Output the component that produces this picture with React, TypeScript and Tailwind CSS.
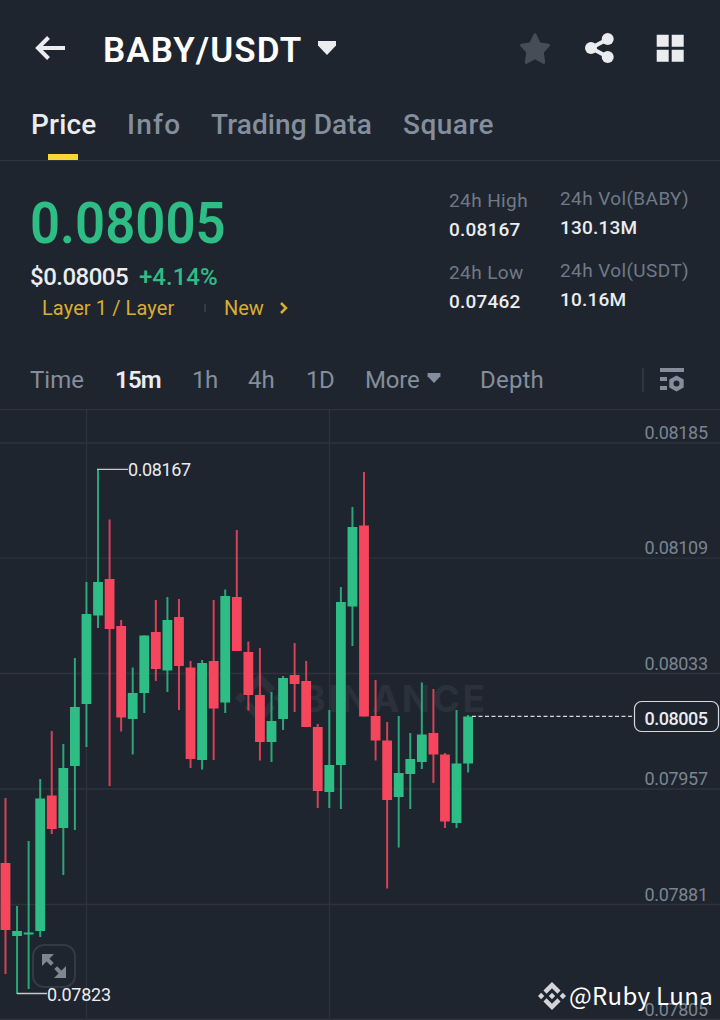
import { SiBinance } from "react-icons/si";

const UP = "#2ebd85";
const DOWN = "#f6465d";
const CHART_TOP = 409;

// [direction, wick top, body top, body bottom, wick bottom]
const candles: [string, number, number, number, number][] = [
  ["d", 798, 863, 930, 974],
  ["u", 906, 931, 936, 994],
  ["u", 841, 932.5, 934.5, 989],
  ["u", 779, 798.5, 931, 937],
  ["d", 731, 795.5, 829, 834],
  ["u", 744, 768, 828, 875],
  ["u", 658, 707, 766, 830],
  ["u", 582, 614, 704, 747],
  ["u", 469, 582, 615.5, 628],
  ["d", 519.5, 579, 629, 786],
  ["d", 620, 626, 717.5, 731.5],
  ["u", 667.5, 693, 719, 754.5],
  ["u", 635.5, 635.5, 693, 713],
  ["d", 600, 632, 669, 681],
  ["u", 597, 620, 670.5, 692],
  ["d", 599, 617, 666, 710],
  ["d", 661, 667.5, 759, 768],
  ["u", 660, 663, 760, 769.5],
  ["d", 600, 661, 708.5, 760],
  ["u", 589.5, 596, 702.5, 713],
  ["d", 530, 597, 651, 651],
  ["d", 641.5, 652, 695, 710.5],
  ["d", 648, 695, 742, 760.5],
  ["u", 692, 721, 742, 762],
  ["u", 676, 678, 719, 730],
  ["d", 643, 675, 684, 712],
  ["d", 661, 681, 727, 727],
  ["d", 724, 727, 791, 808],
  ["u", 710, 765, 792, 808],
  ["u", 587, 602, 765, 809],
  ["u", 507, 527, 606.5, 646],
  ["d", 472, 525.5, 716.5, 716.5],
  ["d", 680, 716, 740.5, 760.5],
  ["d", 722, 740.5, 800, 888.5],
  ["u", 716, 773, 797, 847.5],
  ["u", 733, 759, 774, 809],
  ["u", 682.5, 734.5, 762, 769],
  ["d", 689, 733, 754.5, 783],
  ["d", 753, 754.5, 821.5, 828],
  ["u", 710, 763.5, 823, 828],
  ["u", 715, 716.5, 763.5, 772.5],
];

const axis = [
  { y: 443, label: "0.08185" },
  { y: 558.2, label: "0.08109" },
  { y: 673.5, label: "0.08033" },
  { y: 789, label: "0.07957" },
  { y: 904.5, label: "0.07881" },
  { y: 1019.5, label: "0.07805" },
];

const stats = [
  { label: "24h High", value: "0.08167" },
  { label: "24h Low", value: "0.07462" },
];

const volumes = [
  { label: "24h Vol(BABY)", value: "130.13M" },
  { label: "24h Vol(USDT)", value: "10.16M" },
];

const Caret = ({ className }: { className: string }) => (
  <svg viewBox="0 0 18 14" className={className} fill="currentColor">
    <path d="M0 0h18v4.5L9 14 0 4.5z" />
  </svg>
);

const Header = () => (
  <header className="flex h-24 items-center">
    <svg viewBox="0 0 30 24" className="ml-[35px] h-6 w-[30px] text-[#eaecef]" fill="none" stroke="currentColor" strokeWidth="4">
      <path d="M30 12H4M13.5 1.5L3 12l10.500 10.500" />
    </svg>
    <h1 className="ml-[38px] w-[202px] pt-1.5 text-[35px] leading-10 font-semibold tracking-[1.1px] whitespace-nowrap text-white">
      BABY/USDT
    </h1>
    <Caret className="ml-[13px] h-3.5 w-[18px] text-[#eaecef]" />
    <svg viewBox="0 0 30 31" className="ml-[184px] h-[31px] w-[30px] text-[#474d57]" fill="currentColor">
      <path d="M13.600 1.200q1.400-2 2.800 0l3.900 8.300 8.400 1.300q2.200.7.800 2.400l-5.700 6.300 1.400 9.700q-.1 2.200-2.100 1.600L15 26.300l-8.100 4.500q-2 .6-2.100-1.600l1.400-9.700L.5 13.200q-1.400-1.700.8-2.400l8.400-1.300z" />
    </svg>
    <svg viewBox="0 0 30 30" className="ml-[35px] h-[30px] w-[30px] text-[#eaecef]" fill="currentColor">
      <path d="M6 15l17-9M6 15l17 9" stroke="currentColor" strokeWidth="4" />
      <circle cx="6" cy="15" r="6" />
      <circle cx="22.700" cy="6" r="6" />
      <circle cx="22.700" cy="24" r="6" />
    </svg>
    <svg viewBox="0 0 28 28" className="ml-[41px] h-7 w-7 text-[#eaecef]" fill="currentColor">
      <path d="M.7.700h12v12h-12zM15.700.700h12v12h-12zM.7 15.700h12v12h-12zM15.700 15.700h12v12h-12z" />
    </svg>
  </header>
);

const Tabs = () => (
  <nav className="flex h-[65px] border-b border-[#2f363f] pl-[31px] text-[28px] leading-[57px] font-medium whitespace-nowrap text-[#848e9c]">
    <div className="flex w-24 flex-col text-[#eaecef]">
      <span className="h-[58px] tracking-[0.2px]">Price</span>
      <span className="ml-[17px] h-1.5 w-[30px] bg-[#fcd535]" />
    </div>
    <span className="w-[84px] tracking-[1.3px]">Info</span>
    <span className="w-48 tracking-[0.1px]">Trading Data</span>
    <span className="tracking-[0.5px]">Square</span>
  </nav>
);

const Summary = () => (
  <section className="flex h-[189px]">
    <div className="w-[449px] pt-8">
      <div className="ml-[30px] w-fit origin-left scale-x-[0.925] text-[57px] leading-[62px] font-semibold text-[#2ebd85]">0.08005</div>
      <div className="mt-[7px] flex pl-[30px] text-2xl leading-[30px] font-medium">
        <span className="w-[109px] tracking-[-0.5px] text-[#eaecef]">$0.08005</span>
        <span className="text-[#2ebd85]">+4.14%</span>
      </div>
      <div className="mt-px flex items-center pl-[42px] text-xl leading-[30px] text-[#d9ae2f]">
        <span className="w-[162px] tracking-[0.1px]">Layer 1 / Layer</span>
        <span className="h-2 w-0.5 bg-[#343b46]" />
        <span className="ml-[18px] w-[56px]">New</span>
        <svg viewBox="0 0 8 12" className="h-3 w-2" fill="none" stroke="currentColor" strokeWidth="2.500">
          <path d="M1 1l5 5-5 5" />
        </svg>
      </div>
    </div>
    <div className="w-[111px] pt-[26px]">
      {stats.map((s) => (
        <div key={s.label} className="h-[72px]">
          <div className="text-[19px] leading-7 tracking-[0.4px] text-[#707a87]">{s.label}</div>
          <div className="pt-px text-[19px] leading-7 font-medium tracking-[0.2px] text-[#eaecef]">{s.value}</div>
        </div>
      ))}
    </div>
    <div className="pt-6">
      {volumes.map((s) => (
        <div key={s.label} className="h-[72px]">
          <div className="text-[19px] leading-7 tracking-[0.4px] text-[#707a87]">{s.label}</div>
          <div className="pt-px text-[19px] leading-7 font-medium tracking-[0.2px] text-[#eaecef]">{s.value}</div>
        </div>
      ))}
    </div>
  </section>
);

const Intervals = () => (
  <nav className="flex h-[59px] items-center pl-[30px] text-2xl whitespace-nowrap text-[#848e9c]">
    <span className="w-[85px]">Time</span>
    <span className="w-[77px] font-semibold tracking-[-0.8px] text-[#eaecef]">15m</span>
    <span className="w-14 tracking-[-0.5px]">1h</span>
    <span className="w-[58px]">4h</span>
    <span className="w-[59px] tracking-[-0.5px]">1D</span>
    <span className="w-[62px] tracking-[-0.2px]">More</span>
    <Caret className="mb-1 h-2.5 w-3.5" />
    <span className="ml-[39px] w-[162px] tracking-[0.2px]">Depth</span>
    <span className="h-6 w-0.5 bg-[#2f363f]" />
    <svg viewBox="0 0 24 24" className="ml-4 h-6 w-6" fill="currentColor">
      <path d="M0 0h24v4H0zM0 9h7v4H0zM0 18h7v4H0z" />
      <path fillRule="evenodd" d="M16.500 7.500l7.200 4v8l-7.200 4-7.200-4v-8zm0 5a3 3 0 100 6 3 3 0 000-6z" />
    </svg>
  </nav>
);

const Chart = () => (
  <section className="relative h-[611px]">
    <svg viewBox={`0 ${CHART_TOP} 720 611`} className="block h-[611px] w-[720px]">
      {/* Grid */}
      <g stroke="#2c333d" strokeWidth="1.300">
        <path d="M0 409.500h720M86.500 409v611M329.500 409v611" />
        {axis.map((a) => (
          <path key={a.y} d={`M0 ${a.y}h720`} />
        ))}
      </g>

      {/* Watermark */}
      <g transform="translate(235 673)">
        <SiBinance size={50} color="#2b313b" />
      </g>
      <text x="301" y="712" fontSize="37" fontWeight="700" fontFamily="Inter, sans-serif" fill="#2b313b" textLength="184">
        BINANCE
      </text>

      <g fontSize="18" fill="#7b8491">
        {axis.map((a) => (
          <text key={a.label} x="644.500" y={a.y - 4} textLength="63.500">
            {a.label}
          </text>
        ))}
      </g>

      {candles.map(([dir, high, top, bottom, low], i) => {
        const x = 5.5 + i * 11.565;
        return (
          <g key={i} fill={dir === "u" ? UP : DOWN}>
            <rect x={x - 1} y={high} width="2" height={low - high} fillOpacity="0.850" />
            <rect x={x - 4.9} y={top} width="9.800" height={bottom - top} />
          </g>
        );
      })}

      {/* High and low markers */}
      <g fontSize="18" fill="#eaecef">
        <path d="M97 469.300h31M17 993.500h30" stroke="#c3c7ce" strokeWidth="1.300" />
        <text x="128" y="476" textLength="63">0.08167</text>
        <text x="47" y="1001" textLength="64">0.07823</text>
      </g>

      {/* Last price */}
      <path d="M472 716.300h162" stroke="#d5d8dd" strokeWidth="1.300" strokeDasharray="4 2.500" />
      <rect x="634.500" y="701.500" width="84" height="30" rx="7" fill="#1f252f" stroke="#d5d8dd" strokeWidth="1.200" />
      <text x="644.500" y="725" fontSize="18" fontWeight="500" fill="#eaecef" textLength="63.500">
        0.08005
      </text>
    </svg>

    {/* Fullscreen button */}
    <button className="absolute bottom-8 left-8 flex h-11 w-11 items-center justify-center rounded-xl border-2 border-[#343a45]">
      <svg viewBox="0 0 24 24" className="h-6 w-6 text-[#7f8693]" fill="currentColor">
        <path d="M0 0h12L0 12zM24 24H12l12-12z" />
        <path d="M4 4l6.300 6.300M20 20l-6.300-6.300" stroke="currentColor" strokeWidth="4" />
      </svg>
    </button>

    <div className="absolute right-[7px] bottom-[7px] flex items-center text-white">
      <SiBinance className="mt-0.5 h-7 w-7 text-[#d3d5d9]" />
      <span className="ml-[3px] font-['Noto_Sans_CJK_SC',sans-serif] text-2xl leading-9 tracking-[0.35px] whitespace-nowrap">
        @Ruby Luna
      </span>
    </div>
  </section>
);

const App = () => {
  return (
    <main className="h-[1020px] w-[720px] overflow-hidden bg-[#1f252f] font-[Roboto,sans-serif]">
      <Header />
      <Tabs />
      <Summary />
      <Intervals />
      <Chart />
    </main>
  );
};

export default App;
